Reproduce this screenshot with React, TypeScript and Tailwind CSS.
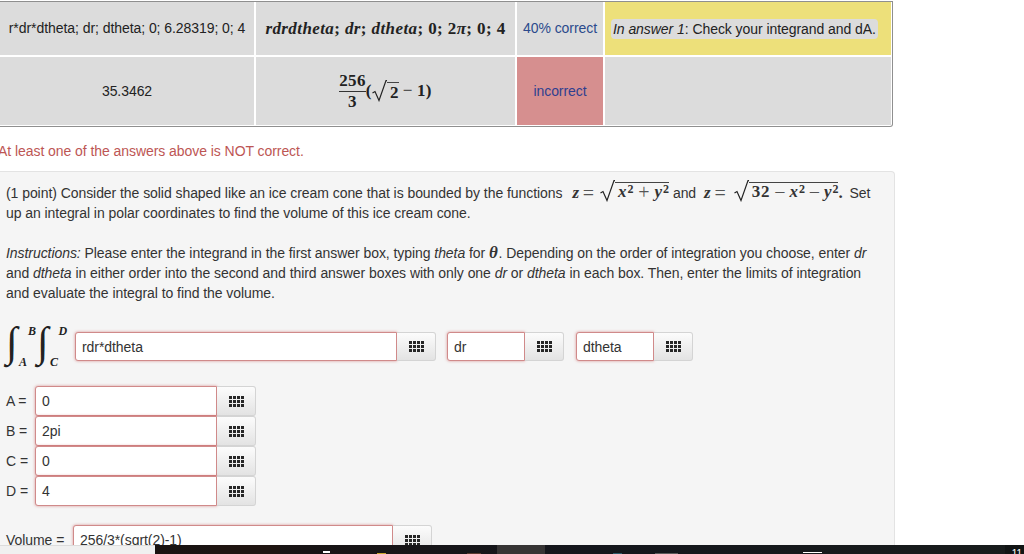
const sans = "font-['Liberation_Sans',Arial,sans-serif]";
const serif = "font-['Liberation_Serif','Times_New_Roman',serif]";

const GridIcon = () => (
  <svg width="15" height="11" viewBox="0 0 15 11" fill="#262626">
    {[0, 4, 8].map((y) =>
      [0, 4, 8, 12].map((x) => <rect key={x + "-" + y} x={x} y={y} width="3" height="3" />)
    )}
  </svg>
);

const AnswerInput = ({ value, width, h = "h-[30px]" }: { value: string; width: string; h?: string }) => (
  <div className={"flex shrink-0 " + h}>
    <div className={"flex items-center bg-white border border-[#d08a8a] rounded-l-[3px] pl-[6px] text-[14px] text-[#333] shadow-[0_0_3px_rgba(200,80,80,0.6)] overflow-hidden " + width}>
      {value}
    </div>
    <div className="flex items-center justify-center w-[39px] border border-l-0 border-[#d4d4d4] rounded-r-[3px] bg-gradient-to-b from-[#fcfcfc] to-[#e3e3e3]">
      <GridIcon />
    </div>
  </div>
);

const Sqrt = ({ children, h = "h-[20px]" }: { children: React.ReactNode; h?: string }) => (
  <span className="inline-flex items-end">
    <svg width="15" height="22" viewBox="0 0 15 22" className="shrink-0" fill="none" stroke="#222" strokeWidth="1.2">
      <path d="M0.5 13 L3 11.5 L7 20.5 L14 0.6 L15 0.6" />
    </svg>
    <span className={"flex items-center border-t border-[#444] pl-[3px] leading-[20px] " + h}>{children}</span>
  </span>
);

const M = ({ children }: { children: React.ReactNode }) => (
  <span className={serif + " italic font-semibold text-[17px] tracking-[0.8px]"}>{children}</span>
);

const N = ({ children, className = "" }: { children: React.ReactNode; className?: string }) => (
  <span className={serif + " font-semibold text-[17px] tracking-[0.8px] " + className}>{children}</span>
);

const Sq = () => <span className={serif + " font-semibold text-[12px] leading-[11px] self-start mt-[1px]"}>2</span>;

const Op = ({ children, m = "mx-[3px]" }: { children: React.ReactNode; m?: string }) => (
  <span className={serif + " text-[20px] leading-[20px] text-[#555] " + m}>{children}</span>
);

const Integral = ({ up, low }: { up: string; low: string }) => (
  <div className="flex items-center w-[31px] shrink-0">
    <span className={serif + " text-[42px] leading-[46px] italic w-[13px] shrink-0 -mt-[10px]"}>∫</span>
    <div className={serif + " flex flex-col justify-between h-[42px] w-[18px] italic font-semibold text-[12px] leading-[11px]"}>
      <span className="self-end -translate-x-[1px]">{up}</span>
      <span className="self-start">{low}</span>
    </div>
  </div>
);

const LimitRow = ({ label, value }: { label: string; value: string }) => (
  <div className="flex items-center h-[30px]">
    <span className="w-[29px] shrink-0 text-[14px] text-[#333]">{label}</span>
    <AnswerInput value={value} width="w-[182px]" />
  </div>
);

export default function App() {
  return (
    <div className={"relative w-[1024px] h-[554px] overflow-hidden bg-white text-[14px] tracking-[-0.06px] text-[#333] " + sans}>
      {/* results table */}
      <div className="pt-[1px] w-[893px]">
        <div className="grid grid-cols-[254px_259px_86px_1fr] gap-[2px] h-[126px] grid-rows-[53px_1fr] bg-white border-y border-r border-[#8f8f8f] rounded-br-[3px] pr-[1px] pb-[1px] text-[#222]">
          <div className="flex items-center justify-center bg-[#dcdcdc]">r*dr*dtheta; dr; dtheta; 0; 6.28319; 0; 4</div>
          <div className={"flex items-center justify-center whitespace-pre bg-[#dcdcdc] text-[17px] tracking-[0.4px] font-semibold " + serif}>
            <i>rdrdtheta</i>; <i>dr</i>; <i>dtheta</i>; 0; 2<i>π</i>; 0; 4
          </div>
          <div className="flex items-center justify-center bg-[#dcdcdc] text-[#2b4a8c]">40% correct</div>
          <div className="flex items-center bg-[#ede07a] pl-[6px]">
            <span className="bg-[#dcdcdc] rounded-[4px] px-[2px] leading-[20px] whitespace-nowrap">
              <i>In answer 1</i>: Check your integrand and dA.
            </span>
          </div>
          <div className="flex items-center justify-center bg-[#dcdcdc]">35.3462</div>
          <div className={"flex items-center justify-center bg-[#dcdcdc] font-semibold text-[17px] tracking-[0.4px] " + serif}>
            <span className="flex flex-col items-center leading-[20px]">
              <span className="border-b border-[#333]">256</span>
              <span>3</span>
            </span>
            <span>(</span>
            <Sqrt><span>2</span></Sqrt>
            <span className="ml-[4px] text-[#555]">−</span>
            <span className="ml-[4px]">1)</span>
          </div>
          <div className="flex items-center justify-center bg-[#d68f8f] text-[#2f3f8f]">incorrect</div>
          <div className="bg-[#dcdcdc]"></div>
        </div>
      </div>

      <p className="mt-[14px] -ml-[2px] leading-[20px] text-[#bd5654]">At least one of the answers above is NOT correct.</p>

      {/* problem panel */}
      <div className="mt-[10px] w-[895px] h-[400px] bg-[#f5f5f5] border-t border-r border-[#e3e3e3] rounded-tr-[4px] pl-[6px] pt-[11px] pr-[20px] leading-[20px]">
        <p className="whitespace-nowrap h-[20px] flex items-center">
          <span>(1 point) Consider the solid shaped like an ice cream cone that is bounded by the functions</span>
          <span className="ml-[10px]"><M>z</M></span>
          <Op>=</Op>
          <span className="ml-[3px]"><Sqrt><M>x</M><Sq /><Op m="mx-[5px]">+</Op><M>y</M><Sq /></Sqrt></span>
          <span className="ml-[4px]">and</span>
          <span className="ml-[8px]"><M>z</M></span>
          <Op>=</Op>
          <span className="ml-[5px]"><Sqrt><N>32</N><Op m="mx-[4px]">−</Op><M>x</M><Sq /><Op m="mx-[4px]">−</Op><M>y</M><Sq /></Sqrt></span>
          <N>.</N>
          <span className="ml-[6px]">Set</span>
        </p>
        <p>up an integral in polar coordinates to find the volume of this ice cream cone.</p>
        <p className="mt-[20px] whitespace-nowrap"><i>Instructions:</i> Please enter the integrand in the first answer box, typing <i>theta</i> for <M>θ</M>. Depending on the order of integration you choose, enter <i>dr</i></p>
        <p className="whitespace-nowrap">and <i>dtheta</i> in either order into the second and third answer boxes with only one <i>dr</i> or <i>dtheta</i> in each box. Then, enter the limits of integration</p>
        <p>and evaluate the integral to find the volume.</p>

        <div className="flex items-center mt-[19px] h-[49px]">
          <div className="flex w-[69px] shrink-0 text-[#222]">
            <Integral up="B" low="A" />
            <Integral up="D" low="C" />
          </div>
          <AnswerInput value="rdr*dtheta" width="w-[322px]" h="h-[29px]" />
          <div className="w-[11px] shrink-0"></div>
          <AnswerInput value="dr" width="w-[78px]" h="h-[29px]" />
          <div className="w-[12px] shrink-0"></div>
          <AnswerInput value="dtheta" width="w-[78px]" h="h-[29px]" />
        </div>

        <div className="mt-[15px] flex flex-col">
          <LimitRow label="A =" value="0" />
          <LimitRow label="B =" value="2pi" />
          <LimitRow label="C =" value="0" />
          <LimitRow label="D =" value="4" />
        </div>

        <div className="flex items-center h-[30px] mt-[19px]">
          <span className="w-[67px] shrink-0">Volume =</span>
          <AnswerInput value="256/3*(sqrt(2)-1)" width="w-[320px]" />
        </div>
      </div>

      {/* desktop taskbar cut in at the bottom of the screenshot */}
      <div className="absolute left-0 right-0 bottom-0 h-[9px] flex">
        <div className="w-[155px] bg-[#f0f0f0] border-t border-[#dcdcdc]"></div>
        <div className="flex-1 bg-gradient-to-r from-[#1a1311] via-[#14161c] to-[#181c1c] relative overflow-hidden">
          <div className="absolute left-[55px] top-0 w-[70px] h-full bg-[#1f1411]"></div>
          <div className="absolute left-[168px] bottom-[1px] w-[7px] h-[2px] bg-white"></div>
          <div className="absolute left-[222px] bottom-0 w-[9px] h-[1px] bg-[#c9a52c]"></div>
          <div className="absolute left-[312px] bottom-0 w-[14px] h-[1px] bg-[#5a3a30]"></div>
          <div className="absolute left-[342px] top-0 w-[48px] h-full bg-[#363434]"></div>
          <div className="absolute left-[458px] bottom-0 w-[9px] h-[1px] bg-[#2d5a6a]"></div>
          <div className="absolute left-[500px] bottom-0 w-[23px] h-[1px] bg-[#5a5a5a]"></div>
          <div className="absolute left-[648px] bottom-[1px] w-[19px] h-[1px] bg-white"></div>
          <div className="absolute right-0 top-0 w-[19px] h-full bg-[#111414]"></div>
          <span className="absolute right-[2px] top-[4px] text-[10px] leading-[10px] text-white">11</span>
        </div>
      </div>
    </div>
  );
}
